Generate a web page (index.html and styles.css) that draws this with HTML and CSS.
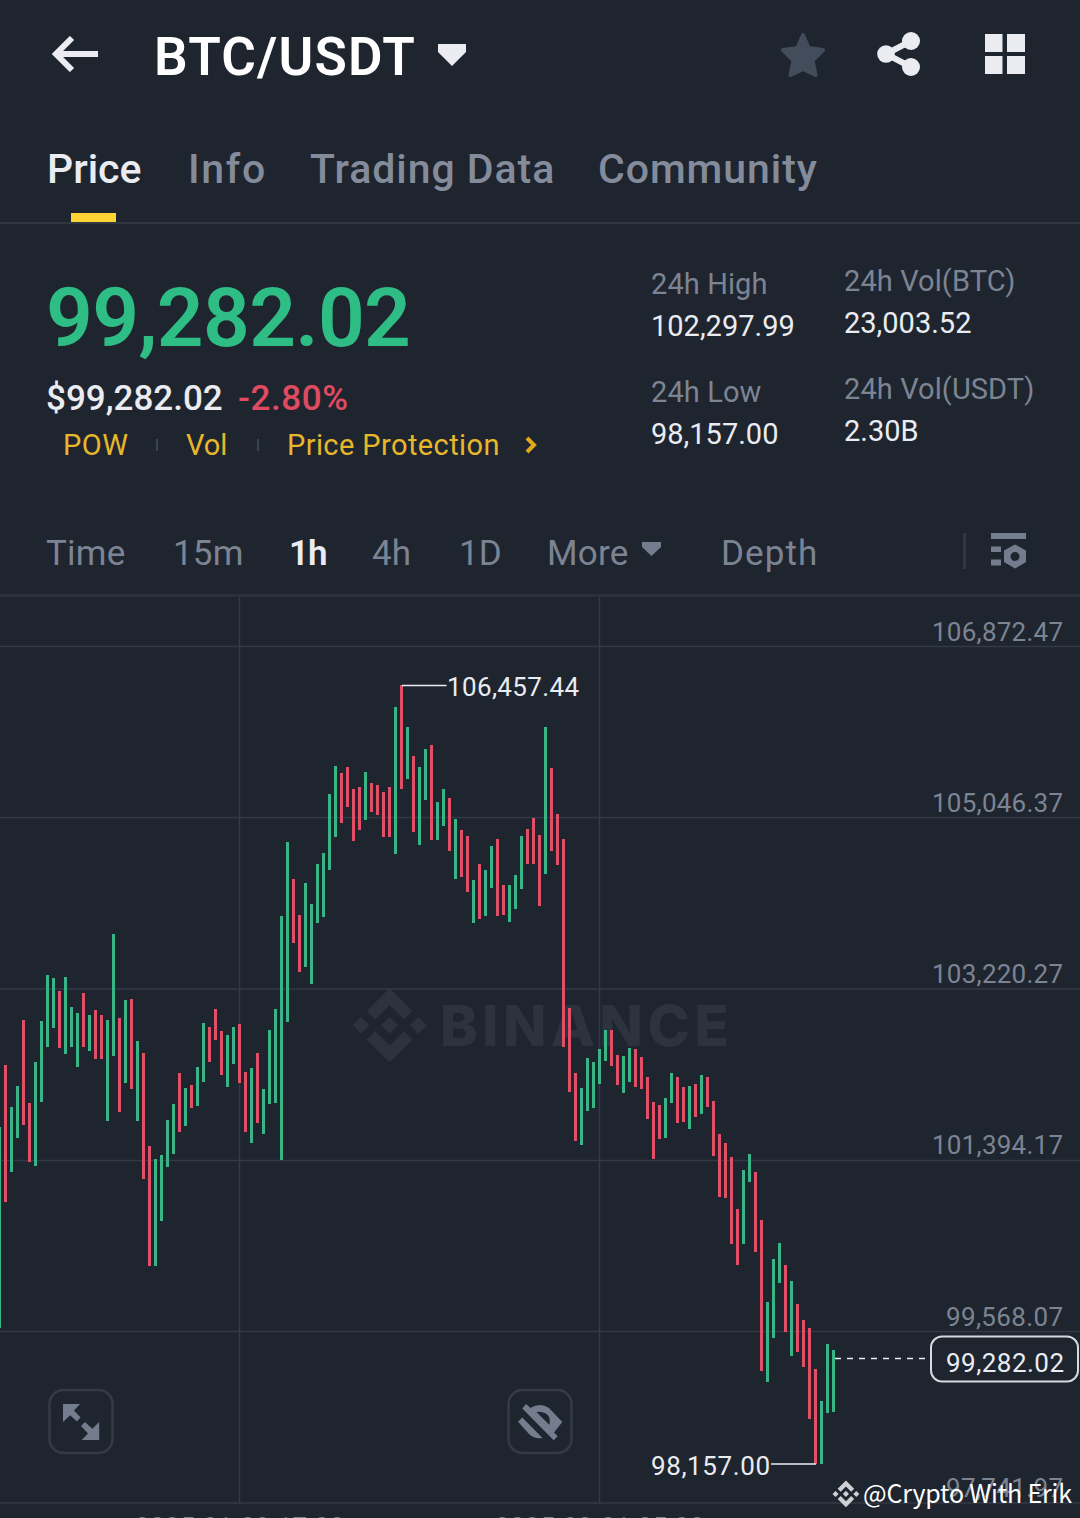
FILE: index.html
```html
<!DOCTYPE html>
<html lang="en">
<head>
    <meta charset="UTF-8">
    <meta name="viewport" content="width=device-width, initial-scale=1.0">
    <title>BTC/USDT</title>
    <link rel="stylesheet" href="styles.css">
</head>
<body>
    <header>
        <svg class="back" width="46" height="36" viewBox="0 0 46 36"><path d="M4 18H46M20 2L4 18L20 34" fill="none" stroke="#eaecf2" stroke-width="6"/></svg>
        <h1>BTC/USDT</h1>
        <svg class="caret" width="28" height="22" viewBox="0 0 28 22"><path d="M0 0H28V8L14 22L0 8Z" fill="#eaecf2"/></svg>
        <div class="actions">
            <svg width="46" height="46" viewBox="0 0 46 46"><path d="M23 4L28.5 17L43 19L32.5 29.5L35.5 44L23 38L10.5 44L13.5 29.5L3 19L17.500 17Z" fill="#434c5a" stroke="#434c5a" stroke-width="4" stroke-linejoin="round"/></svg>
            <svg width="44" height="46" viewBox="0 0 44 46"><path d="M34 10L9 23L34 36" fill="none" stroke="#eaecf2" stroke-width="6"/><g fill="#eaecf2"><circle cx="9" cy="23" r="8.800"/><circle cx="34" cy="10" r="9"/><circle cx="34" cy="36" r="9"/></g></svg>
            <svg width="40" height="40" viewBox="0 0 40 40"><path d="M0 0H17.500V18H0ZM22 0H40V18H22ZM0 22H17.500V40H0ZM22 22H40V40H22Z" fill="#eaecf2"/></svg>
        </div>
    </header>
    <nav class="tabs">
        <a class="active">Price</a>
        <a class="info">Info</a>
        <a>Trading Data</a>
        <a>Community</a>
    </nav>
    <section class="ticker">
        <div class="quote">
            <div class="last-price">99,282.02</div>
            <div class="fiat"><span class="usd">$99,282.02</span><span class="change">-2.80%</span></div>
            <div class="tags">
                <span class="pow">POW</span><i></i><span class="vol">Vol</span><i></i><span class="protection">Price Protection</span>
                <svg width="12" height="18" viewBox="0 0 12 18"><path d="M2 2L9 9L2 16" fill="none" stroke="#e0a91d" stroke-width="4"/></svg>
            </div>
        </div>
        <div class="stats">
            <div class="stat-col">
                <div class="stat"><span class="label">24h High</span><span class="value">102,297.99</span></div>
                <div class="stat"><span class="label">24h Low</span><span class="value">98,157.00</span></div>
            </div>
            <div class="stat-col raised">
                <div class="stat"><span class="label">24h Vol(BTC)</span><span class="value">23,003.52</span></div>
                <div class="stat"><span class="label">24h Vol(USDT)</span><span class="value">2.30B</span></div>
            </div>
        </div>
    </section>
    <nav class="intervals">
        <a>Time</a>
        <a>15m</a>
        <a class="active">1h</a>
        <a>4h</a>
        <a>1D</a>
        <a>More <svg width="19" height="14" viewBox="0 0 19 14"><path d="M0 0H19V5L9.500 14L0 5Z" fill="#747d8e"/></svg></a>
        <a class="depth">Depth</a>
        <span class="divider"></span>
        <svg class="settings" width="36" height="36" viewBox="0 0 36 36"><path d="M0 0H35V6H0ZM0 13.500H10V19H0ZM0 26.500H10V32.500H0ZM24 11.500L35 17.500V29L24 35.500L13 29V17.500ZM24 19A4.500 4.500 0 1 0 24 28A4.500 4.500 0 1 0 24 19Z" fill="#747d8e" fill-rule="evenodd"/></svg>
    </nav>
    <main class="chart">
        <svg width="1080" height="921" viewBox="0 597 1080 921">
            <defs>
                <path id="logo" d="M38.730 53.200l24.590-24.580 24.600 24.600 14.300-14.310L63.320 0l-38.900 38.900zM0 63.310l14.300-14.310 14.310 14.310-14.310 14.300zM38.730 73.410l24.590 24.590 24.600-24.600 14.310 14.290-38.900 38.910-38.910-38.880zM98 63.310l14.300-14.310 14.310 14.300-14.310 14.320zM77.830 63.300L63.320 48.780 48.810 63.280l14.510 14.500z"/>
            </defs>
            <g class="watermark">
                <use href="#logo" transform="translate(352.600 988.300) scale(.585)"/>
                <text x="440" y="1046" textLength="289">BINANCE</text>
            </g>
            <path class="grid" d="M0 646.500H1080M0 817.500H1080M0 989H1080M0 1160.500H1080M0 1331.500H1080M0 1503H1080M239.500 597V1503M599.500 597V1503"/>
            <path class="up" id="up"/>
            <path class="down" id="down"/>
            <g class="axis">
                <text x="932" y="640.500" textLength="131">106,872.47</text>
                <text x="932" y="811.500" textLength="131">105,046.37</text>
                <text x="932" y="982.500" textLength="131">103,220.27</text>
                <text x="932" y="1154" textLength="131">101,394.17</text>
                <text x="946" y="1326" textLength="117">99,568.07</text>
                <text x="946" y="1497" textLength="117">97,741.97</text>
                <text x="135" y="1535.500" textLength="209">2025-01-29 17:00</text>
                <text x="495" y="1535.500" textLength="209">2025-02-01 05:00</text>
            </g>
            <path class="marker" d="M402 685.500H446.500M771 1464H816"/>
            <path class="marker dashed" d="M835 1358.500H926"/>
            <rect class="price-box" x="931" y="1336.500" width="147" height="45" rx="11"/>
            <g class="callout">
                <text x="447" y="696" textLength="132">106,457.44</text>
                <text x="651" y="1475" textLength="119">98,157.00</text>
                <text x="946" y="1372" textLength="118">99,282.02</text>
            </g>
            <g class="control">
                <rect x="49.500" y="1390" width="63" height="63" rx="14"/>
                <path d="M63 1404H80L74 1410.500L80.500 1417.300L77 1421.500L70.200 1415.300L63 1422ZM99.200 1440H81.700L88 1433.500L81 1426L85 1422L92.300 1428.700L99.200 1422Z"/>
                <rect x="508.500" y="1390" width="63" height="63" rx="14"/>
                <path d="M526 1404L530.500 1408Q540 1402 549 1408L562.300 1422L554 1432.500L557.700 1436.300L553.700 1440.300L522.300 1408.500ZM536.500 1412L549.500 1425Q551 1417 546 1413.500Q541 1411 536.500 1412ZM522.300 1417.500L542.500 1438Q535 1439.500 529 1434L518 1421.700Z" fill-rule="evenodd"/>
            </g>
            <g class="credit">
                <use href="#logo" transform="translate(832.500 1480.500) scale(.212)"/>
                <text x="863" y="1503" textLength="209">@Crypto With Erik</text>
            </g>
        </svg>
    </main>
    <script>
        // [direction, high y, low y], one bar per hour
        const bars = [
            ['G',1127,1328],['R',1065,1202],['G',1107,1172],['G',1086,1138],['R',1020,1125],['R',1103,1162],
            ['G',1062,1166],['G',1021,1102],['G',975,1047],['G',978,1028],['R',991,1048],['G',977,1054],
            ['G',1007,1047],['G',1013,1067],['R',993,1047],['G',1015,1051],['R',1010,1059],['R',1015,1059],
            ['G',1020,1121],['G',934,1056],['R',1018,1112],['G',1000,1083],['R',999,1089],['G',1041,1121],
            ['R',1053,1179],['R',1146,1266],['G',1159,1266],['G',1155,1221],['G',1120,1167],['G',1104,1154],
            ['R',1073,1132],['G',1088,1126],['R',1085,1108],['G',1067,1106],['G',1023,1082],['R',1027,1062],
            ['R',1009,1040],['R',1031,1075],['G',1035,1087],['G',1027,1064],['R',1024,1083],['R',1072,1132],
            ['G',1068,1143],['R',1053,1123],['G',1089,1134],['G',1030,1104],['G',1009,1103],['G',916,1160],
            ['G',842,1022],['R',879,943],['R',915,972],['G',883,967],['G',904,984],['G',864,923],
            ['G',853,917],['G',794,870],['G',766,837],['R',773,823],['R',767,807],['R',789,841],
            ['R',787,830],['G',772,820],['R',783,812],['R',785,815],['R',792,837],['R',787,837],
            ['G',707,854],['R',685,789],['G',727,779],['R',756,832],['G',767,845],['G',749,800],
            ['R',745,840],['G',802,840],['G',789,826],['R',798,851],['G',819,879],['R',830,877],
            ['R',836,892],['G',880,923],['R',864,919],['G',870,916],['G',846,888],['R',839,916],
            ['R',885,915],['G',885,922],['G',875,909],['G',836,889],['R',829,864],['R',818,864],
            ['R',835,906],['G',727,874],['R',768,851],['R',814,865],['R',839,1047],['R',1008,1092],
            ['R',1073,1141],['G',1088,1145],['G',1058,1111],['G',1062,1108],['G',1049,1084],['G',1030,1061],
            ['R',1030,1066],['R',1055,1085],['G',1056,1093],['G',1048,1082],['R',1049,1087],['R',1057,1089],
            ['R',1077,1119],['R',1102,1159],['R',1105,1139],['G',1098,1138],['G',1073,1103],['R',1077,1123],
            ['R',1087,1122],['G',1086,1129],['R',1084,1117],['G',1075,1114],['R',1077,1107],['R',1101,1156],
            ['R',1134,1197],['R',1143,1198],['R',1157,1244],['R',1209,1265],['G',1170,1244],['G',1154,1182],
            ['R',1172,1252],['R',1220,1371],['G',1302,1382],['G',1259,1338],['G',1243,1283],['R',1265,1332],
            ['G',1281,1356],['R',1304,1352],['R',1320,1367],['R',1328,1419],['R',1369,1464],['G',1401,1464],
            ['G',1344,1413],['G',1350,1412]
        ];
        let up = '', down = '';
        bars.forEach(([dir, high, low], i) => {
            const line = `M${i * 6 - 0.5} ${high}V${low}`;
            if (dir === 'G') up += line; else down += line;
        });
        document.getElementById('up').setAttribute('d', up);
        document.getElementById('down').setAttribute('d', down);
    </script>
</body>
</html>
```
FILE: styles.css
```css
* {
    box-sizing: border-box;
}
body {
    width: 1080px;
    height: 1518px;
    margin: 0;
    overflow: hidden;
    background: #1f252f;
    color: #eaecf2;
    font-family: Roboto, 'Liberation Sans', sans-serif;
}
svg {
    display: block;
    flex: none;
}
header {
    display: flex;
    align-items: center;
    height: 108px;
    padding: 0 55px 0 52px;
}
h1 {
    margin: 5px 0 0 56px;
    font-size: 53px;
    line-height: 62px;
    font-weight: 600;
    letter-spacing: 1.2px;
    color: #ffffff;
    width: 262px;
    white-space: nowrap;
}
.caret {
    margin: 2px 0 0 22px;
}
.actions {
    display: flex;
    align-items: center;
    margin-left: auto;
}
.actions svg + svg {
    margin-left: 51px;
}
.actions svg:last-child {
    margin-left: 64px;
}
/* Page tabs */
.tabs {
    display: grid;
    grid-template-columns: 141px 122px 288px auto;
    height: 116px;
    padding: 37px 0 0 47px;
    border-bottom: 2px solid #303741;
    font-size: 41px;
    line-height: 48px;
    font-weight: 500;
    letter-spacing: 0.95px;
    color: #848c9b;
}
.tabs .active {
    letter-spacing: 0;
    color: #eaecf2;
}
.tabs .info {
    letter-spacing: 1.7px;
}
.tabs .active::after {
    content: '';
    display: block;
    width: 45px;
    height: 9px;
    margin: 20px 0 0 24px;
    background: #fcd535;
}
/* Price and 24h numbers */
.ticker {
    display: flex;
    height: 283px;
}
.quote {
    width: 651px;
    padding: 46px 0 0 46px;
}
.last-price {
    font-size: 82px;
    line-height: 96px;
    font-weight: 600;
    letter-spacing: -0.7px;
    color: #2ebd85;
}
.fiat {
    display: flex;
    margin-top: 12px;
    font-size: 35px;
    line-height: 41px;
    font-weight: 500;
}
.usd {
    width: 192px;
}
.change {
    letter-spacing: 0.6px;
    color: #e04b61;
}
.tags {
    display: flex;
    align-items: center;
    margin-top: 9px;
    padding-left: 17px;
    font-size: 29px;
    line-height: 34px;
    color: #e6b62b;
}
.tags i {
    width: 2px;
    height: 12px;
    background: #3b434f;
}
.pow {
    width: 93px;
    letter-spacing: 0.5px;
}
.vol {
    width: 71px;
    margin-left: 28px;
}
.protection {
    width: 238px;
    margin-left: 28px;
    letter-spacing: 0.4px;
}
.stats {
    display: flex;
    padding-top: 42px;
}
.stat-col {
    width: 193px;
}
.stat-col.raised {
    margin-top: -3px;
}
.stat {
    height: 108px;
    font-size: 29px;
    line-height: 36px;
    white-space: nowrap;
}
.label, .value {
    display: block;
}
.label {
    letter-spacing: 0.1px;
    color: #7c8493;
}
.value {
    margin-top: 6px;
}
/* Chart intervals */
.intervals {
    display: grid;
    grid-template-columns: 127px 117px 82px 87px 88px 174px 242px 28px 36px;
    align-items: center;
    height: 90px;
    padding: 0 0 0 46px;
    border-bottom: 3px solid #2a313c;
    font-size: 35px;
    line-height: 41px;
    letter-spacing: 0.2px;
    color: #7c8493;
}
.intervals a {
    display: flex;
    align-items: center;
    padding-top: 5px;
}
.intervals .active {
    margin-left: -1px;
    letter-spacing: -1px;
    font-weight: 600;
    color: #eaecf2;
}
.intervals .depth {
    letter-spacing: 1.1px;
}
.intervals a svg {
    margin: -8px 0 0 14px;
}
.divider {
    width: 3px;
    height: 36px;
    background: #303741;
}
/* Chart */
.grid {
    stroke: #333a45;
    stroke-width: 1.5;
}
.up, .down {
    stroke-width: 3;
}
.up {
    stroke: #38b487;
}
.down {
    stroke: #e04f66;
}
.chart text {
    font-size: 26px;
}
.axis {
    fill: #7c8493;
}
.callout {
    fill: #eaecf2;
}
.marker {
    fill: none;
    stroke: #eaecf2;
    stroke-width: 1.7;
}
.dashed {
    stroke-dasharray: 6;
}
.price-box {
    fill: #1f252f;
    stroke: #d5d8de;
    stroke-width: 2;
}
.control rect {
    fill: #1f252f;
    stroke: #343b47;
    stroke-width: 2.5;
}
.control path {
    fill: #747d8e;
}
.watermark {
    fill: #2d333e;
}
.chart .watermark text {
    font-family: Inter, sans-serif;
    font-size: 57px;
    font-weight: 800;
}
.credit {
    fill: #cfd0d2;
}
.chart .credit text {
    font-family: 'Noto Sans CJK SC', 'Noto Sans', sans-serif;
    font-size: 25px;
    font-weight: 400;
    fill: #ffffff;
}
```
